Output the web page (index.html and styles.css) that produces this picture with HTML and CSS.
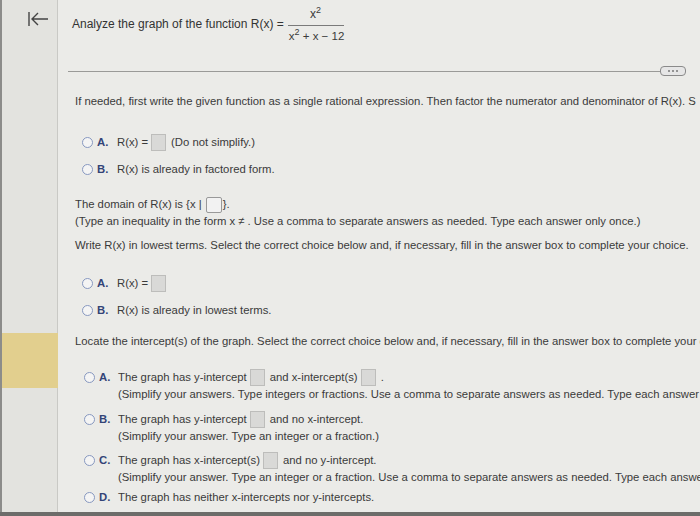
FILE: index.html
```html
<!DOCTYPE html>
<html>
<head>
<meta charset="utf-8">
<link rel="stylesheet" href="styles.css">
</head>
<body>
<div class="page">
  <aside class="side">
    <div class="back">
      <svg width="24" height="16" viewBox="0 0 24 16"><path d="M2 1V15M21 8H5M11 2L5 8L11 14" fill="none" stroke="#444" stroke-width="1.4"/></svg>
    </div>
    <div class="flag"></div>
  </aside>
  <main class="main">
    <div class="head">
      <span class="title">Analyze the graph of the function R(x) =</span>
      <span class="frac">
        <span class="num">x<sup>2</sup></span>
        <span class="den">x<sup>2</sup> + x − 12</span>
      </span>
    </div>
    <div class="rulerow">
      <div class="rule"></div>
      <div class="more"><span></span><span></span><span></span></div>
    </div>
    <div class="content">
      <p class="line first">If needed, first write the given function as a single rational expression. Then factor the numerator and denominator of R(x). S</p>
      <div class="opt o1"><span class="radio"></span><span class="let">A.</span><span>R(x) =</span><span class="box"></span><span>(Do not simplify.)</span></div>
      <div class="opt o2"><span class="radio"></span><span class="let">B.</span><span>R(x) is already in factored form.</span></div>
      <p class="line dom">The domain of R(x) is {x | <span class="box wbox"></span>}.</p>
      <p class="line">(Type an inequality in the form x ≠ . Use a comma to separate answers as needed. Type each answer only once.)</p>
      <p class="line wr">Write R(x) in lowest terms. Select the correct choice below and, if necessary, fill in the answer box to complete your choice.</p>
      <div class="opt o3"><span class="radio"></span><span class="let">A.</span><span>R(x) =</span><span class="box"></span></div>
      <div class="opt o4"><span class="radio"></span><span class="let">B.</span><span>R(x) is already in lowest terms.</span></div>
      <p class="line loc">Locate the intercept(s) of the graph. Select the correct choice below and, if necessary, fill in the answer box to complete your c</p>
      <div class="opt2 i1"><span class="radio"></span><span class="let">A.</span>
        <div class="txt"><div class="row">The graph has y-intercept<span class="box"></span>and x-intercept(s)<span class="box"></span>.</div>
        <div class="sub">(Simplify your answers. Type integers or fractions. Use a comma to separate answers as needed. Type each answer o</div></div></div>
      <div class="opt2 i2"><span class="radio"></span><span class="let">B.</span>
        <div class="txt"><div class="row">The graph has y-intercept<span class="box"></span>and no x-intercept.</div>
        <div class="sub">(Simplify your answer. Type an integer or a fraction.)</div></div></div>
      <div class="opt2 i3"><span class="radio"></span><span class="let">C.</span>
        <div class="txt"><div class="row">The graph has x-intercept(s)<span class="box"></span>and no y-intercept.</div>
        <div class="sub">(Simplify your answer. Type an integer or a fraction. Use a comma to separate answers as needed. Type each answer o</div></div></div>
      <div class="opt2 i4"><span class="radio"></span><span class="let">D.</span>
        <div class="txt"><div class="row">The graph has neither x-intercepts nor y-intercepts.</div></div></div>
    </div>
  </main>
</div>
<div class="bottom"></div>
</body>
</html>
```
FILE: styles.css
```css
html, body { margin: 0; padding: 0; }
body {
  width: 700px; height: 516px; overflow: hidden;
  background: #e8e8e5;
  font-family: "Liberation Sans", Arial, sans-serif;
  font-size: 11.3px; color: #3a3a3a;
  position: relative;
}
.page { display: flex; height: 512px; }
.side {
  width: 55px; flex: none;
  background: #e3e3df;
  border-left: 2px solid #8c8c8a;
  border-right: 1px solid #c9c9c5;
  display: flex; flex-direction: column;
}
.back { margin: 11px 0 0 25px; height: 16px; }
.flag { margin-top: 306px; height: 55px; width: 60px; background: #e2cf8e; }
.main { flex: 1; background: #ebebe8; overflow: hidden; }
.head { display: flex; padding: 4px 0 0 14px; height: 44px; }
.title { margin-top: 12px; font-size: 12px; line-height: 16px; margin-right: 3px; color: #333; }
.frac { display: flex; flex-direction: column; align-items: center; font-size: 12px; }
.num { line-height: 20px; padding: 0 0 1px; border-bottom: 1px solid #7a7a7a; width: 56px; text-align: center; }
.den { line-height: 20px; padding-left: 2px; font-size: 11.5px; }
sup { font-size: 9px; vertical-align: 5px; line-height: 0; }
.rulerow { display: flex; align-items: center; margin: 18px 14px 0 10px; height: 10px; }
.rule { flex: 1; height: 1px; background: #9a9a98; }
.more {
  width: 24px; height: 8px; border: 1px solid #8a8a8a; border-radius: 4px; background: #e6e6e6;
  display: flex; align-items: center; justify-content: center; gap: 2px;
}
.more span { width: 2px; height: 2px; background: #777; border-radius: 1px; }
.content { padding-left: 17px; white-space: nowrap; }
.line { margin: 0; line-height: 16px; }
.first { margin-top: 17px; }
.opt { display: flex; align-items: center; height: 18px; margin-left: 7px; }
.o1 { margin-top: 24px; }
.o2 { margin-top: 9px; }
.o3 { margin-top: 21px; }
.o4 { margin-top: 9px; }
.radio {
  width: 9px; height: 9px; border: 1.5px solid #8798c0; border-radius: 50%;
  background: #f4f4f4; flex: none; margin-right: 4px;
}
.let { font-weight: bold; color: #334477; width: 20px; flex: none; }
.box {
  display: inline-block; width: 13px; height: 15px; background: #d9d9d7; border: 1px solid #bdbdbb;
  margin: 0 5px 0 3px; vertical-align: middle;
}
.wbox { width: 14px; height: 14px; background: #f2f2f2; border-color: #999; margin: 0 1px; border-radius: 2px; }
.dom { margin-top: 18px; }
.wr { margin-top: 8px; }
.loc { margin-top: 14px; }
.opt2 { display: flex; margin-left: 9px; }
.opt2 .radio { margin-top: 4px; }
.opt2 .let { width: 19px; line-height: 18px; }
.txt .row { line-height: 18px; display: flex; align-items: center; }
.txt .sub { line-height: 16px; }
.i1 { margin-top: 19px; }
.i2 { margin-top: 8px; }
.i3 { margin-top: 7px; }
.i4 { margin-top: 3px; }
.bottom { position: absolute; left: 0; right: 0; bottom: 0; height: 4px; background: #6c6c6a; }
```
